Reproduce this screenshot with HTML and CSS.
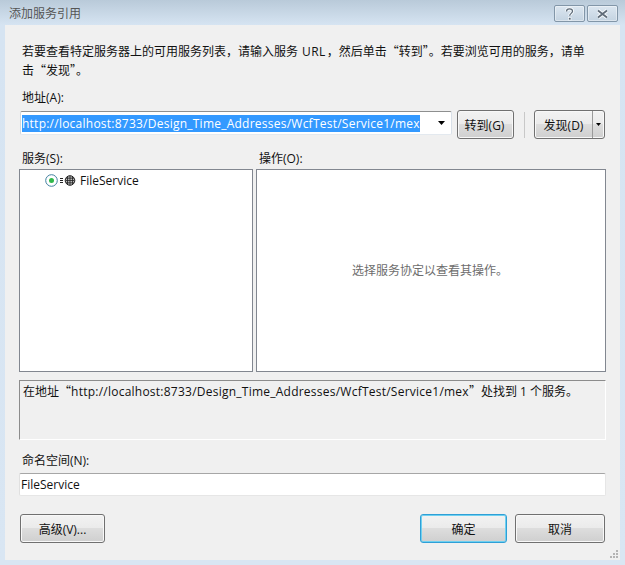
FILE: index.html
```html
<!DOCTYPE html>
<html lang="zh">
<head>
<meta charset="utf-8">
<title>添加服务引用</title>
<link rel="stylesheet" href="styles.css">
</head>
<body>
<div class="window">
  <header class="titlebar">
    <span class="title">添加服务引用</span>
    <div class="caption">
      <button class="cap">
        <svg width="11" height="14" viewBox="0 0 11 14"><path d="M2.500 4.500C2.500 2.700 3.800 1.800 5.500 1.800S8.500 2.700 8.500 4.300c0 2-2.800 2.200-2.800 4.500" fill="none" stroke="#f4f8fb" stroke-width="3.200"/><path d="M2.500 4.500C2.500 2.700 3.800 1.800 5.500 1.800S8.500 2.700 8.500 4.300c0 2-2.800 2.200-2.800 4.500" fill="none" stroke="#5f6b78" stroke-width="1.300"/><rect x="4.500" y="10.500" width="2.500" height="2.500" fill="#5f6b78" stroke="#f4f8fb" stroke-width=".7"/></svg>
      </button>
      <button class="cap">
        <svg width="13" height="10" viewBox="0 0 13 10"><path d="M2 1.500l9 7M11 1.500l-9 7" stroke="#f4f8fb" stroke-width="3.800"/><path d="M2 1.500l9 7M11 1.500l-9 7" stroke="#5f6b78" stroke-width="1.700"/></svg>
      </button>
    </div>
  </header>
  <main class="client">
    <p class="intro">若要查看特定服务器上的可用服务列表，请输入服务<span class="en">URL</span>，然后单击<span class="q">“</span>转到<span class="q">”</span>。若要浏览可用的服务，请单击<span class="q">“</span>发现<span class="q">”</span>。</p>
    <label class="label addr-label">地址(A):</label>
    <div class="addr-row">
      <div class="combo">
        <span class="selected url">http://localhost:8733/Design_Time_Addresses/WcfTest/Service1/mex</span>
        <svg class="arrow" width="7" height="4" viewBox="0 0 7 4"><path d="M0 0h7L3.500 4z" fill="#000"/></svg>
      </div>
      <button class="btn go">转到(G)</button>
      <div class="sep"></div>
      <div class="btn split">
        <span class="split-main">发现(D)</span>
        <span class="split-arrow"><svg width="5" height="3" viewBox="0 0 5 3"><path d="M0 0h5L2.500 3z" fill="#000"/></svg></span>
      </div>
    </div>
    <div class="panes">
      <section class="pane pane-left">
        <label class="label">服务(S):</label>
        <div class="box tree">
          <svg class="radio" width="13" height="13" viewBox="0 0 13 13"><circle cx="6.500" cy="6.500" r="5.800" fill="#fff" stroke="#3f7f9f"/><circle cx="6.500" cy="6.500" r="2.500" fill="#2fb84a"/></svg>
          <svg class="globe" width="16" height="11" viewBox="0 0 16 11"><path d="M0 3.500h3M0 5.500h3M0 7.500h3" stroke="#222"/><circle cx="10" cy="5.500" r="4.800" fill="#bbb" stroke="#222"/><path d="M10 1v9M5.500 5.500h9M6 3.200h8M6 7.800h8M7.500 1.500v8M12.500 1.500v8" stroke="#222" stroke-width=".8"/></svg>
          <span>FileService</span>
        </div>
      </section>
      <section class="pane pane-right">
        <label class="label">操作(O):</label>
        <div class="box ops">选择服务协定以查看其操作。</div>
      </section>
    </div>
    <div class="status">在地址<span class="q">“</span><span class="url">http://localhost:8733/Design_Time_Addresses/WcfTest/Service1/mex</span><span class="q">”</span>处找到 1 个服务。</div>
    <label class="label ns-label">命名空间(N):</label>
    <div class="ns-input">FileService</div>
    <div class="actions">
      <button class="btn adv">高级(V)...</button>
      <div class="spacer"></div>
      <button class="btn ok">确定</button>
      <button class="btn cancel">取消</button>
    </div>
    <svg class="grip" width="9" height="9" viewBox="0 0 9 9"><path d="M6 0h2v2H6zM3 3h2v2H3zM6 3h2v2H6zM0 6h2v2H0zM3 6h2v2H3zM6 6h2v2H6z" fill="#b4b4b4"/></svg>
  </main>
</div>
</body>
</html>
```
FILE: styles.css
```css
* { box-sizing: border-box; }
html, body { margin: 0; padding: 0; }
body {
  width: 625px;
  height: 565px;
  overflow: hidden;
  font-family: "Open Sans", "Noto Sans CJK SC", sans-serif;
  font-size: 12px;
  color: #111;
}
.q { font-family: "Noto Sans CJK SC", sans-serif; }
.url { letter-spacing: .24px; }
.en { margin: 0 1px 0 4px; letter-spacing: .4px; }
.window {
  width: 625px;
  height: 565px;
  display: flex;
  flex-direction: column;
  padding: 0 5px 5px;
  background: linear-gradient(#b9cad9 0, #d6e4f2 25px, #d9e6f3 100%);
}
.titlebar {
  height: 25px;
  display: flex;
  justify-content: space-between;
  flex: none;
}
.title {
  padding: 5px 0 0 4px;
  color: #555;
  line-height: 18px;
}
.caption {
  display: flex;
  gap: 2px;
  padding: 5px 2px 0 0;
}
.cap {
  width: 31px;
  height: 17px;
  padding: 0;
  display: flex;
  align-items: center;
  justify-content: center;
  border: 1px solid #8296a8;
  border-radius: 2px;
  background: linear-gradient(#dbe6f0, #c4d3e1);
  box-shadow: inset 0 0 0 1px rgba(255,255,255,.4);
}
.client {
  position: relative;
  flex: 1;
  background: #f0f0f0;
  padding: 17px 14px 0;
  display: flex;
  flex-direction: column;
}
.intro {
  margin: 0 15px 0 3px;
  line-height: 18px;
  height: 36px;
}
.label {
  display: block;
  line-height: 16px;
  margin-left: 3px;
}
.addr-label { margin-top: 12px; }
.addr-row {
  display: flex;
  align-items: flex-start;
  margin-top: 4px;
  margin-left: 1px;
}
.combo {
  width: 432px;
  height: 24px;
  margin-top: 1px;
  background: #fff;
  border: 1px solid;
  border-color: #8e8f8f #d9e0e8 #e3e9ef #d2d6da;
  border-radius: 2px;
  display: flex;
  align-items: center;
  padding: 0 6px 0 1px;
  justify-content: space-between;
}
.selected {
  background: #3399ff;
  color: #fff;
  line-height: 17px;
  height: 17px;
  white-space: nowrap;
}
.btn {
  height: 29px;
  padding: 0;
  font: inherit;
  color: #111;
  border: 1px solid #707070;
  border-radius: 3px;
  background: linear-gradient(#f2f2f2 0, #ebebeb 48%, #dddddd 50%, #cfcfcf 100%);
  box-shadow: inset 0 0 0 1px #f8f8f8;
  display: flex;
  align-items: center;
  justify-content: center;
}
.go { width: 57px; margin-left: 5px; padding-right: 2px; }
.sep {
  width: 1px;
  height: 26px;
  margin: 2px 9px 0 10px;
  background: #c8c8c8;
}
.split { width: 71px; }
.split-main {
  width: 58px;
  height: 100%;
  display: flex;
  align-items: center;
  justify-content: center;
  border-right: 1px solid #9a9a9a;
}
.split-arrow {
  flex: 1;
  display: flex;
  align-items: center;
  justify-content: center;
}
.panes {
  display: flex;
  margin-top: 10px;
  gap: 3px;
}
.pane-left { width: 234px; }
.pane-right { width: 350px; }
.pane .label { line-height: 20px; height: 20px; }
.box {
  height: 203px;
  margin-top: 0;
  background: #fff;
  border: 1px solid #828790;
}
.tree {
  display: flex;
  align-items: flex-start;
  padding: 3px 0 0 25px;
  line-height: 16px;
}
.radio { margin-top: 1px; flex: none; }
.globe { margin: 2px 0 0 2px; flex: none; }
.tree span { margin-left: 4px; }
.ops {
  display: flex;
  align-items: center;
  justify-content: center;
  color: #6d6d6d;
  padding: 0 2px 2px 0;
}
.status {
  height: 60px;
  margin-top: 8px;
  border: 1px solid;
  border-color: #8c8c8c #fff #fff #8c8c8c;
  padding: 1px 3px;
  line-height: 18px;
  white-space: nowrap;
}
.ns-label { margin-top: 13px; line-height: 16px; }
.ns-input {
  height: 23px;
  margin-top: 4px;
  background: #fff;
  border: 1px solid;
  border-color: #a6a6a6 #e6e6e6 #e6e6e6 #e0e0e0;
  border-radius: 2px;
  line-height: 21px;
  padding-left: 1px;
}
.actions {
  display: flex;
  margin-top: 18px;
  margin-left: 1px;
  margin-right: 1px;
}
.adv { width: 85px; }
.spacer { flex: 1; }
.ok {
  width: 87px;
  border: 1px solid #2f9fd6;
  box-shadow: inset 0 0 0 1px #6fd0f0;
}
.cancel { width: 90px; margin-left: 8px; }
.grip { position: absolute; right: 1px; bottom: 1px; }
```
